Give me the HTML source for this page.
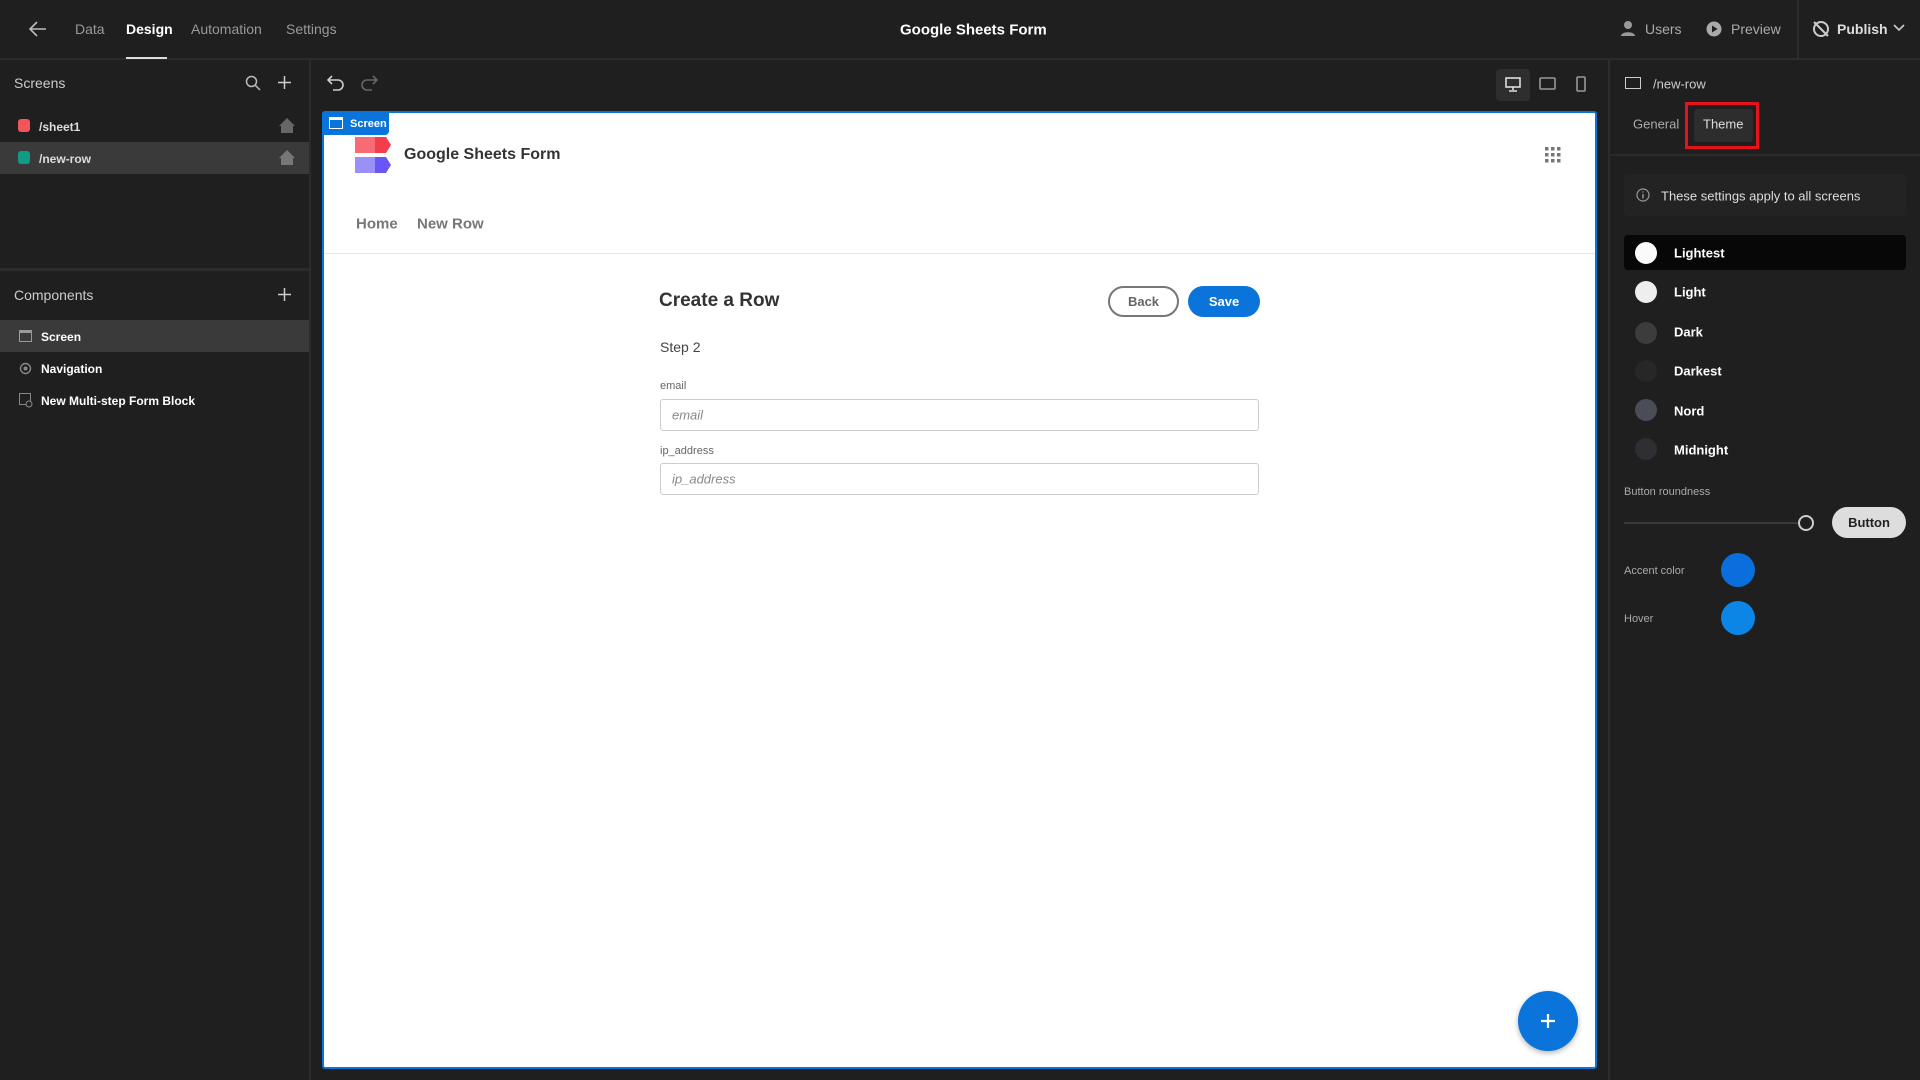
<!DOCTYPE html>
<html><head><meta charset="utf-8"><style>
*{box-sizing:border-box;margin:0;padding:0}
body{width:1920px;height:1080px;background:#1f1f1f;font-family:"Liberation Sans",sans-serif;color:#ccc;position:relative;overflow:hidden}
.a{position:absolute}
.t{position:absolute;white-space:nowrap;transform:translateY(-50%)}
svg{position:absolute}
</style></head><body>
<!-- top bar -->
<div class="a" style="left:0;top:58px;width:1920px;height:2px;background:#2c2c2c"></div>
<svg style="left:28px;top:20px" width="20" height="18" viewBox="0 0 20 18"><path d="M18 9H3M9 2L2 9l7 7" stroke="#bbb" stroke-width="1.6" fill="none"/></svg>
<div class="t" style="left:75px;top:29px;font-size:14px;color:#999">Data</div>
<div class="t" style="left:126px;top:29px;font-size:14px;color:#fff;font-weight:bold">Design</div>
<div class="a" style="left:126px;top:57px;width:41px;height:2px;background:#ddd"></div>
<div class="t" style="left:191px;top:29px;font-size:14px;color:#999">Automation</div>
<div class="t" style="left:286px;top:29px;font-size:14px;color:#999">Settings</div>
<div class="t" style="left:900px;top:30px;font-size:15px;color:#fff;font-weight:bold">Google Sheets Form</div>
<svg style="left:1620px;top:20px" width="18" height="17" viewBox="0 0 18 17"><circle cx="8" cy="5" r="4" fill="#999"/><path d="M1 16c0-5 14-5 14 0z" fill="#999"/></svg>
<div class="t" style="left:1645px;top:29px;font-size:14px;color:#aaa">Users</div>
<svg style="left:1706px;top:21px" width="16" height="16" viewBox="0 0 16 16"><circle cx="8" cy="8" r="7.5" fill="#aaa"/><path d="M6 4.5v7l5.5-3.5z" fill="#1f1f1f"/></svg>
<div class="t" style="left:1731px;top:29px;font-size:14px;color:#aaa">Preview</div>
<div class="a" style="left:1797px;top:0;width:2px;height:58px;background:#2c2c2c"></div>
<svg style="left:1812px;top:20px" width="18" height="18" viewBox="0 0 18 18"><circle cx="9" cy="9" r="7" fill="none" stroke="#ccc" stroke-width="2"/><path d="M2 2l14 14" stroke="#ccc" stroke-width="2"/></svg>
<div class="t" style="left:1837px;top:29px;font-size:14px;color:#ddd;font-weight:bold">Publish</div>
<svg style="left:1893px;top:24px" width="12" height="8" viewBox="0 0 12 8"><path d="M1 1l5 5 5-5" stroke="#ccc" stroke-width="1.6" fill="none"/></svg>

<!-- left panel -->
<div class="a" style="left:309px;top:60px;width:2px;height:1020px;background:#2c2c2c"></div>
<div class="t" style="left:14px;top:83px;font-size:14px;color:#ccc">Screens</div>
<svg style="left:245px;top:75px" width="16" height="16" viewBox="0 0 16 16"><circle cx="6.5" cy="6.5" r="5" fill="none" stroke="#bbb" stroke-width="1.5"/><path d="M10 10l5 5" stroke="#bbb" stroke-width="1.5"/></svg>
<svg style="left:277px;top:75px" width="15" height="15" viewBox="0 0 15 15"><path d="M7.5 1v13M1 7.5h13" stroke="#ccc" stroke-width="1.5"/></svg>
<div class="a" style="left:18px;top:119px;width:12px;height:13px;border-radius:3px;background:#f2545b"></div>
<div class="t" style="left:39px;top:127px;font-size:12px;color:#ddd;font-weight:bold">/sheet1</div>
<svg style="left:279px;top:118px" width="16" height="15" viewBox="0 0 16 15"><path d="M8 0L0 8h2v7h12V8h2z" fill="#666"/></svg>
<div class="a" style="left:0;top:142px;width:309px;height:32px;background:#3a3a3a"></div>
<div class="a" style="left:18px;top:151px;width:12px;height:13px;border-radius:3px;background:#0e9a85"></div>
<div class="t" style="left:39px;top:159px;font-size:12px;color:#ddd;font-weight:bold">/new-row</div>
<svg style="left:279px;top:150px" width="16" height="15" viewBox="0 0 16 15"><path d="M8 0L0 8h2v7h12V8h2z" fill="#777"/></svg>
<div class="a" style="left:0;top:268px;width:309px;height:3px;background:#2c2c2c"></div>
<div class="t" style="left:14px;top:295px;font-size:14px;color:#ccc">Components</div>
<svg style="left:277px;top:287px" width="15" height="15" viewBox="0 0 15 15"><path d="M7.5 1v13M1 7.5h13" stroke="#ccc" stroke-width="1.5"/></svg>
<div class="a" style="left:0;top:320px;width:309px;height:32px;background:#3a3a3a"></div>
<div class="a" style="left:19px;top:330px;width:13px;height:12px;border:1px solid #999;border-top-width:3px"></div>
<div class="t" style="left:41px;top:337px;font-size:12px;color:#fff;font-weight:bold">Screen</div>
<svg style="left:19px;top:362px" width="13" height="13" viewBox="0 0 13 13"><circle cx="6.5" cy="6.5" r="5" fill="none" stroke="#888" stroke-width="1.4"/><circle cx="6.5" cy="6.5" r="2" fill="#888"/></svg>
<div class="t" style="left:41px;top:369px;font-size:12px;color:#fff;font-weight:bold">Navigation</div>
<svg style="left:19px;top:393px" width="14" height="15" viewBox="0 0 14 15"><rect x=".5" y=".5" width="11" height="11" fill="none" stroke="#888"/><circle cx="10" cy="11" r="3" fill="#1f1f1f" stroke="#888"/></svg>
<div class="t" style="left:41px;top:401px;font-size:12px;color:#fff;font-weight:bold">New Multi-step Form Block</div>

<!-- canvas toolbar -->
<svg style="left:327px;top:75px" width="18" height="16" viewBox="0 0 18 16"><path d="M5 1L1 5l4 4M1 5h10a5 5 0 010 10H6" stroke="#ccc" stroke-width="1.6" fill="none"/></svg>
<svg style="left:360px;top:75px" width="18" height="16" viewBox="0 0 18 16"><path d="M13 1l4 4-4 4M17 5H7a5 5 0 000 10h5" stroke="#666" stroke-width="1.6" fill="none"/></svg>
<div class="a" style="left:1496px;top:69px;width:34px;height:32px;border-radius:4px;background:#2e2e2e"></div>
<svg style="left:1505px;top:77px" width="16" height="15" viewBox="0 0 16 15"><rect x="1" y="1" width="14" height="9" fill="none" stroke="#ddd" stroke-width="1.6"/><path d="M8 10v3M4 14h8" stroke="#ddd" stroke-width="1.6"/></svg>
<svg style="left:1539px;top:77px" width="17" height="13" viewBox="0 0 17 13"><rect x="1" y="1" width="15" height="11" rx="1" fill="none" stroke="#999" stroke-width="1.6"/></svg>
<svg style="left:1576px;top:76px" width="10" height="16" viewBox="0 0 10 16"><rect x="1" y="1" width="8" height="14" rx="1" fill="none" stroke="#999" stroke-width="1.6"/></svg>

<!-- preview frame -->
<div class="a" style="left:322px;top:111px;width:1275px;height:958px;background:#fff;border:2px solid #0a74da;border-radius:3px"></div>
<div class="a" style="left:322px;top:111px;width:67px;height:24px;background:#0a74da;border-radius:3px 0 4px 0"></div>
<div class="a" style="left:329px;top:117px;width:14px;height:12px;border:1px solid #fff;border-top-width:3px"></div>
<div class="t" style="left:350px;top:124px;font-size:11px;color:#fff;font-weight:bold">Screen</div>
<svg style="left:355px;top:137px" width="37" height="36" viewBox="0 0 37 36"><path d="M0 0h22l4 8-4 8H0z" fill="#f86b74"/><path d="M20 0h11l5 8-5 8H20z" fill="#f23e4c"/><path d="M0 20h22l4 8-4 8H0z" fill="#9a91f6"/><path d="M20 20h11l5 8-5 8H20z" fill="#6a56f5"/></svg>
<div class="t" style="left:404px;top:155px;font-size:16px;color:#333;font-weight:bold">Google Sheets Form</div>
<svg style="left:1545px;top:147px" width="16" height="16" viewBox="0 0 16 16" fill="#777"><rect x="0" y="0" width="3.5" height="3.5"/><rect x="6" y="0" width="3.5" height="3.5"/><rect x="12" y="0" width="3.5" height="3.5"/><rect x="0" y="6" width="3.5" height="3.5"/><rect x="6" y="6" width="3.5" height="3.5"/><rect x="12" y="6" width="3.5" height="3.5"/><rect x="0" y="12" width="3.5" height="3.5"/><rect x="6" y="12" width="3.5" height="3.5"/><rect x="12" y="12" width="3.5" height="3.5"/></svg>
<div class="t" style="left:356px;top:224px;font-size:15px;color:#777;font-weight:bold">Home</div>
<div class="t" style="left:417px;top:224px;font-size:15px;color:#777;font-weight:bold">New Row</div>
<div class="a" style="left:324px;top:253px;width:1271px;height:1px;background:#e6e6e6"></div>
<div class="t" style="left:659px;top:301px;font-size:19px;color:#333;font-weight:bold">Create a Row</div>
<div class="a" style="left:1108px;top:286px;width:71px;height:31px;border:2px solid #777;border-radius:16px;font-size:13px;color:#666;font-weight:bold;text-align:center;line-height:27px">Back</div>
<div class="a" style="left:1188px;top:286px;width:72px;height:31px;background:#0a74da;border-radius:16px;font-size:13px;color:#fff;font-weight:bold;text-align:center;line-height:31px">Save</div>
<div class="t" style="left:660px;top:347px;font-size:14px;color:#444">Step 2</div>
<div class="t" style="left:660px;top:386px;font-size:11px;color:#666">email</div>
<div class="a" style="left:660px;top:399px;width:599px;height:32px;border:1px solid #ccc;border-radius:3px"></div>
<div class="t" style="left:672px;top:415px;font-size:13px;color:#888;font-style:italic">email</div>
<div class="t" style="left:660px;top:451px;font-size:11px;color:#666">ip_address</div>
<div class="a" style="left:660px;top:463px;width:599px;height:32px;border:1px solid #ccc;border-radius:3px"></div>
<div class="t" style="left:672px;top:479px;font-size:13px;color:#888;font-style:italic">ip_address</div>
<div class="a" style="left:1518px;top:991px;width:60px;height:60px;border-radius:50%;background:#0a74da;box-shadow:0 2px 6px rgba(0,0,0,.3)"></div>
<svg style="left:1540px;top:1013px" width="16" height="16" viewBox="0 0 16 16"><path d="M8 1v14M1 8h14" stroke="#fff" stroke-width="2.2"/></svg>

<!-- right panel -->
<div class="a" style="left:1608px;top:60px;width:2px;height:1020px;background:#2c2c2c"></div>
<div class="a" style="left:1625px;top:77px;width:16px;height:12px;border:1.5px solid #ccc"></div>
<div class="t" style="left:1653px;top:84px;font-size:13px;color:#ccc">/new-row</div>
<div class="t" style="left:1633px;top:124px;font-size:13px;color:#aaa">General</div>
<div class="a" style="left:1685px;top:102px;width:74px;height:47px;border:3px solid #e8121f"></div>
<div class="a" style="left:1694px;top:109px;width:59px;height:33px;background:#2d2d2d;border-radius:3px"></div>
<div class="t" style="left:1703px;top:124px;font-size:13px;color:#ddd">Theme</div>
<div class="a" style="left:1610px;top:154px;width:310px;height:2px;background:#2a2a2a"></div>
<div class="a" style="left:1624px;top:174px;width:282px;height:42px;background:#232323;border-radius:4px"></div>
<svg style="left:1636px;top:188px" width="14" height="14" viewBox="0 0 14 14"><circle cx="7" cy="7" r="6" fill="none" stroke="#999" stroke-width="1.2"/><path d="M7 6v4.5M7 3.5v1" stroke="#999" stroke-width="1.4"/></svg>
<div class="t" style="left:1661px;top:196px;font-size:13px;color:#ddd">These settings apply to all screens</div>
<div class="a" style="left:1624px;top:235px;width:282px;height:35px;background:#070707;border-radius:4px"></div>
<div class="a" style="left:1635px;top:242px;width:22px;height:22px;border-radius:50%;background:#fafafa"></div>
<div class="t" style="left:1674px;top:253px;font-size:13px;color:#fff;font-weight:bold">Lightest</div>
<div class="a" style="left:1635px;top:281px;width:22px;height:22px;border-radius:50%;background:#eee"></div>
<div class="t" style="left:1674px;top:292px;font-size:13px;color:#fff;font-weight:bold">Light</div>
<div class="a" style="left:1635px;top:322px;width:22px;height:22px;border-radius:50%;background:#3c3c3c"></div>
<div class="t" style="left:1674px;top:332px;font-size:13px;color:#fff;font-weight:bold">Dark</div>
<div class="a" style="left:1635px;top:360px;width:22px;height:22px;border-radius:50%;background:#272727"></div>
<div class="t" style="left:1674px;top:371px;font-size:13px;color:#fff;font-weight:bold">Darkest</div>
<div class="a" style="left:1635px;top:399px;width:22px;height:22px;border-radius:50%;background:#4a4d55"></div>
<div class="t" style="left:1674px;top:411px;font-size:13px;color:#fff;font-weight:bold">Nord</div>
<div class="a" style="left:1635px;top:438px;width:22px;height:22px;border-radius:50%;background:#2e2f33"></div>
<div class="t" style="left:1674px;top:450px;font-size:13px;color:#fff;font-weight:bold">Midnight</div>
<div class="t" style="left:1624px;top:492px;font-size:11px;color:#aaa">Button roundness</div>
<div class="a" style="left:1624px;top:522px;width:176px;height:2px;background:#3a3a3a"></div>
<div class="a" style="left:1798px;top:515px;width:16px;height:16px;border-radius:50%;border:2px solid #ccc;background:#1f1f1f"></div>
<div class="a" style="left:1832px;top:507px;width:74px;height:31px;border-radius:16px;background:#ddd;font-size:13px;color:#222;font-weight:bold;text-align:center;line-height:31px">Button</div>
<div class="t" style="left:1624px;top:571px;font-size:11px;color:#aaa">Accent color</div>
<div class="a" style="left:1721px;top:553px;width:34px;height:34px;border-radius:50%;background:#0a6fdc"></div>
<div class="t" style="left:1624px;top:619px;font-size:11px;color:#aaa">Hover</div>
<div class="a" style="left:1721px;top:601px;width:34px;height:34px;border-radius:50%;background:#0b85e6"></div>
</body></html>
